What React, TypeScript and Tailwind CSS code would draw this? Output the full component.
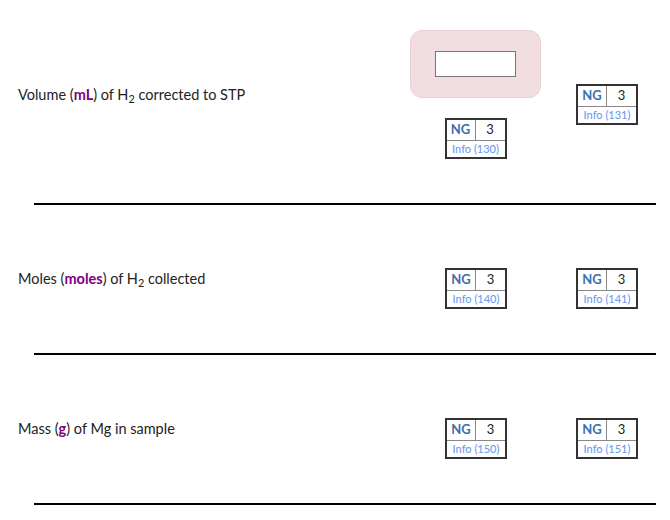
import React from 'react';

const Grader: React.FC<{ id: number }> = ({ id }) => (
  <div className="w-[62px] border-2 border-[#333] bg-white" style={{ fontFamily: 'Lato, sans-serif' }}>
    <div className="flex h-[20px] items-center">
      <div className="w-[29px] h-full border-r border-[#888] flex items-center justify-center text-[13px] font-bold text-[#3b6eae]">NG</div>
      <div className="flex-1 h-full flex items-center justify-center text-[13px] text-[#222]">3</div>
    </div>
    <div className="h-[17px] border-t border-[#888] flex items-center justify-center text-[11px] font-medium text-[#6d9bf3]">
      Info ({id})
    </div>
  </div>
);

const Label: React.FC<{ pre: string; unit: string; post: React.ReactNode }> = ({ pre, unit, post }) => (
  <span className="text-[14.5px] leading-[18px] text-[#222]">
    {pre} (<b className="text-[#800080] font-bold">{unit}</b>) {post}
  </span>
);

const Rule = () => <div className="ml-[34px] w-[622px] h-[2px] bg-black" />;

export default function App() {
  return (
    <div className="w-[670px] h-[520px] bg-white" style={{ fontFamily: 'Lato, "Open Sans", sans-serif' }}>
      <div className="flex h-[203px]">
        <div className="w-[410px] pl-[18px] pt-[82px]">
          <Label pre="Volume" unit="mL" post={<>of H<sub>2</sub> corrected to STP</>} />
        </div>
        <div className="w-[131px] pt-[30px] flex flex-col items-center">
          <div className="w-[131px] h-[68px] rounded-[12px] bg-[#f2dde0] border border-[#ecd0d4] flex items-center justify-center">
            <div className="w-[81px] h-[26px] border border-[#777] bg-white" />
          </div>
          <div className="mt-[20px]">
            <Grader id={130} />
          </div>
        </div>
        <div className="ml-[35px] pt-[84px]">
          <Grader id={131} />
        </div>
      </div>
      <Rule />

      <div className="flex h-[148px]">
        <div className="w-[445px] pl-[18px] pt-[61px]">
          <Label pre="Moles" unit="moles" post={<>of H<sub>2</sub> collected</>} />
        </div>
        <div className="pt-[63px]">
          <Grader id={140} />
        </div>
        <div className="ml-[69px] pt-[63px]">
          <Grader id={141} />
        </div>
      </div>
      <Rule />

      <div className="flex h-[148px]">
        <div className="w-[445px] pl-[18px] pt-[61px]">
          <Label pre="Mass" unit="g" post="of Mg in sample" />
        </div>
        <div className="pt-[63px]">
          <Grader id={150} />
        </div>
        <div className="ml-[69px] pt-[63px]">
          <Grader id={151} />
        </div>
      </div>
      <Rule />
    </div>
  );
}
